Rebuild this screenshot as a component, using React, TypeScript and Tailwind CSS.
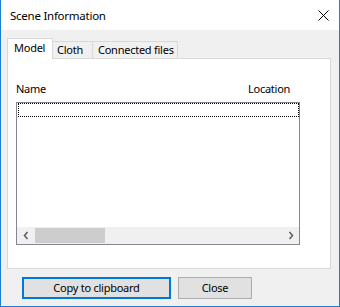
import React from 'react';

const font = { fontFamily: '"Segoe UI", "Noto Sans", sans-serif' };

function ChevronLeft() {
    return (
        <svg width="6" height="9" viewBox="0 0 6 9" className="block">
            <path d="M4.5 1 L1.5 4.5 L4.5 8" fill="none" stroke="#606060" strokeWidth="1.6" />
        </svg>
    );
}

function ChevronRight() {
    return (
        <svg width="6" height="9" viewBox="0 0 6 9" className="block">
            <path d="M1.5 1 L4.5 4.5 L1.5 8" fill="none" stroke="#606060" strokeWidth="1.6" />
        </svg>
    );
}

export default function App() {
    return (
        <div
            className="flex h-[307px] w-[340px] flex-col border-x border-b border-[#1a7fd4] bg-[#f0f0f0] text-[11px] tracking-[-0.25px] whitespace-nowrap text-black"
            style={font}
        >
            {/* Title bar */}
            <div className="flex h-[30px] shrink-0 items-center justify-between bg-white pl-[9px] pr-[10px]">
                <span className="text-[11.5px] leading-[15px]">Scene Information</span>
                <svg width="11" height="11" viewBox="0 0 11 11">
                    <path d="M0.5 0.5 L10.5 10.5 M10.5 0.5 L0.5 10.5" stroke="#000" strokeWidth="1" />
                </svg>
            </div>

            {/* Body */}
            <div className="flex flex-1 flex-col pl-[6px] pr-[8px] pt-[8px]">
                {/* Tabs */}
                <div className="flex h-[20px] items-end">
                    <div className="relative z-10 -mb-px flex h-[21px] w-[46px] items-center border-x border-t border-[#d9d9d9] bg-white pl-[6px] pb-[2px]">
                        Model
                    </div>
                    <div className="flex h-[17px] w-[40px] items-center border-r border-t border-[#d9d9d9] bg-[#f0f0f0] pl-[4px] pt-[1px]">
                        Cloth
                    </div>
                    <div className="flex h-[17px] w-[85px] items-center border-r border-t border-[#d9d9d9] bg-[#f0f0f0] pl-[5px] pt-[1px]">
                        Connected files
                    </div>
                </div>

                {/* Panel */}
                <div className="flex h-[211px] w-[324px] flex-col border border-[#d9d9d9] bg-white pl-[8px]">
                    <div className="mt-[22px] flex h-[15px] items-center leading-[15px]">
                        <span className="w-[232px]">Name</span>
                        <span>Location</span>
                    </div>

                    {/* List */}
                    <div className="mt-[6px] flex h-[143px] w-[284px] flex-col border border-[#828790] bg-white">
                        <div className="ml-px h-[14px] border border-dotted border-black" />
                        <div className="flex-1" />
                        <div className="flex h-[17px] items-center bg-[#f0f0f0]">
                            <div className="flex h-full w-[17px] items-center justify-center">
                                <ChevronLeft />
                            </div>
                            <div className="ml-px h-[15px] w-[70px] bg-[#cdcdcd]" />
                            <div className="flex-1" />
                            <div className="flex h-full w-[17px] items-center justify-center">
                                <ChevronRight />
                            </div>
                        </div>
                    </div>
                </div>

                {/* Buttons */}
                <div className="mt-[8px] flex gap-[7px] pl-[15px]">
                    <button className="flex h-[22px] w-[149px] items-center justify-center border-2 border-[#0078d7] bg-[#e1e1e1]">
                        Copy to clipboard
                    </button>
                    <button className="flex h-[22px] w-[74px] items-center justify-center border border-[#adadad] bg-[#e1e1e1]">
                        Close
                    </button>
                </div>
            </div>
        </div>
    );
}
